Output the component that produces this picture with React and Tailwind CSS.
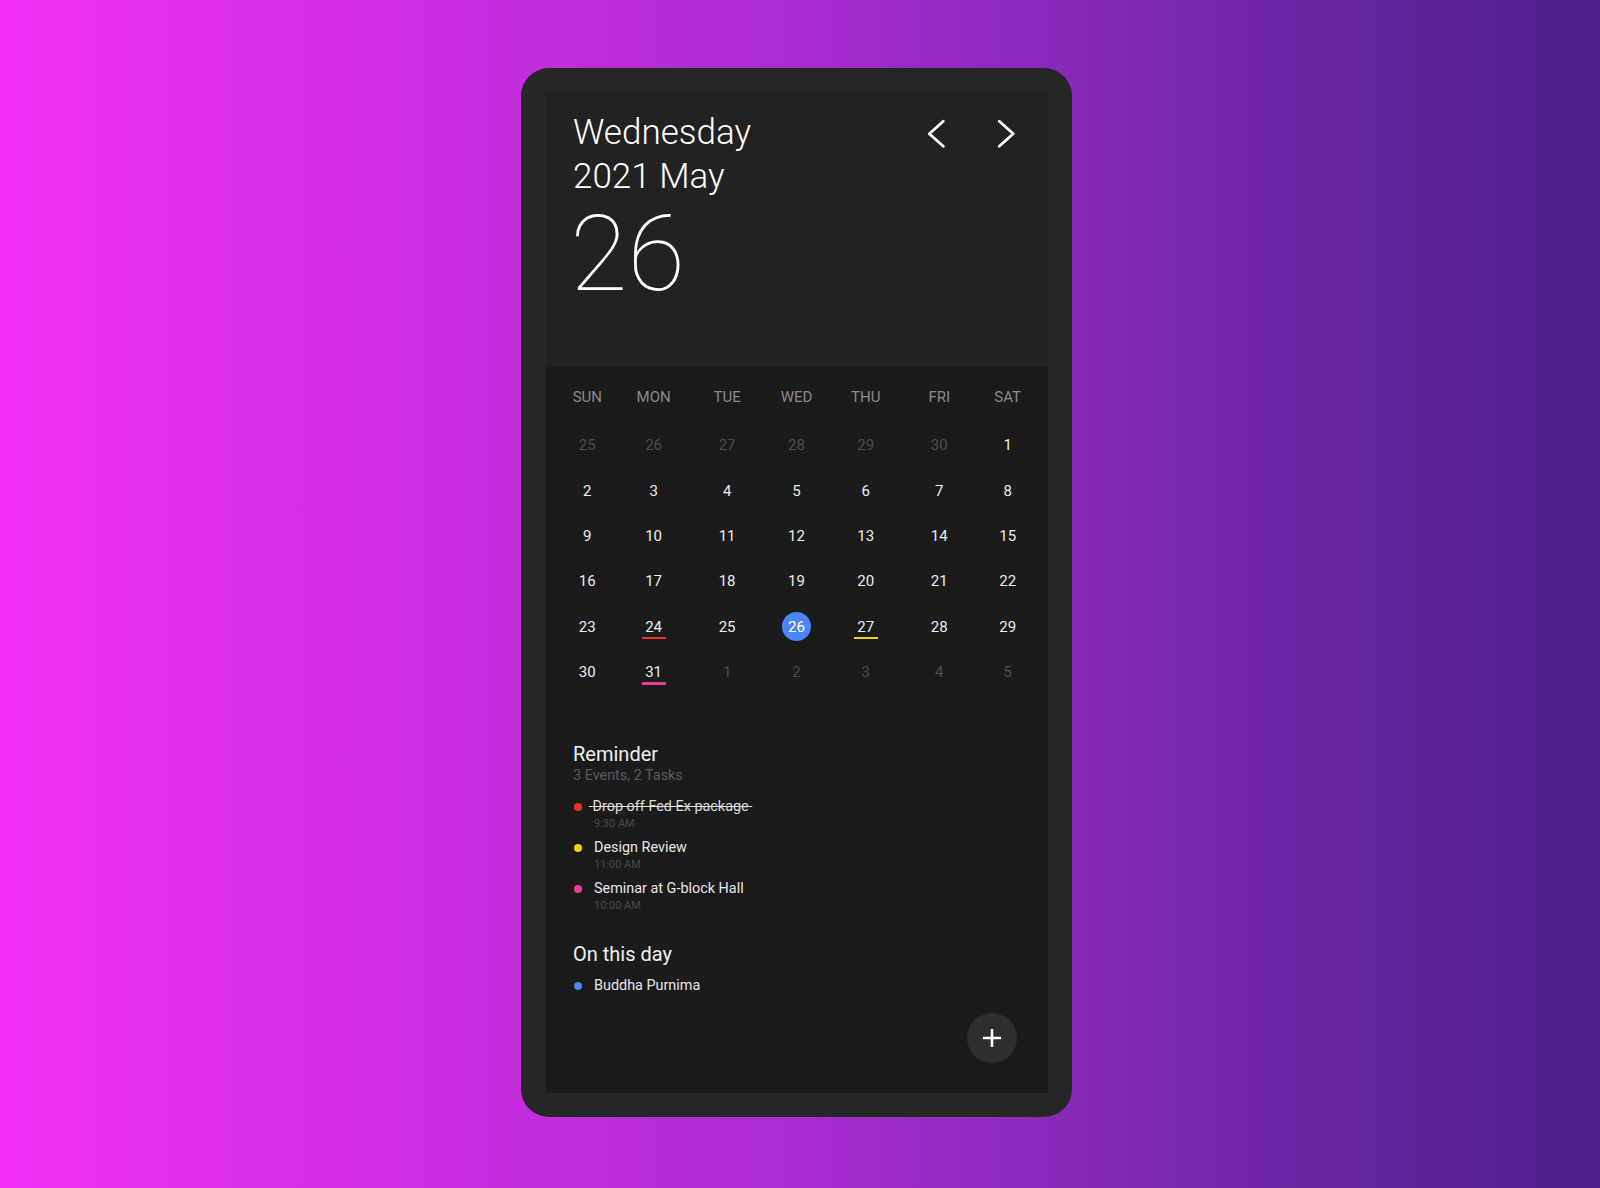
import React from "react";

const weekDays = ["SUN", "MON", "TUE", "WED", "THU", "FRI", "SAT"];

const rows = [
  [["25", 0], ["26", 0], ["27", 0], ["28", 0], ["29", 0], ["30", 0], ["1", 1]],
  [["2", 1], ["3", 1], ["4", 1], ["5", 1], ["6", 1], ["7", 1], ["8", 1]],
  [["9", 1], ["10", 1], ["11", 1], ["12", 1], ["13", 1], ["14", 1], ["15", 1]],
  [["16", 1], ["17", 1], ["18", 1], ["19", 1], ["20", 1], ["21", 1], ["22", 1]],
  [["23", 1], ["24", 1, "red"], ["25", 1], ["26", 1, "sel"], ["27", 1, "yellow"], ["28", 1], ["29", 1]],
  [["30", 1], ["31", 1, "pink"], ["1", 0], ["2", 0], ["3", 0], ["4", 0], ["5", 0]],
];

const cols = "grid grid-cols-[63.6px_69px_78px_60.8px_77.8px_69.2px_67.6px]";

function Underline({ kind }) {
  if (kind === "red")
    return <span className="absolute left-1/2 top-[24.5px] h-[2.5px] w-[24px] -translate-x-1/2 bg-[#e8342a]" />;
  if (kind === "yellow")
    return <span className="absolute left-1/2 top-[24.5px] h-[2.5px] w-[24px] -translate-x-1/2 bg-[#f6d20e]" />;
  if (kind === "pink")
    return <span className="absolute left-1/2 top-[24.5px] h-[2.5px] w-[24px] -translate-x-1/2 bg-[#ee3e93]" />;
  return null;
}

function DayCell({ d }) {
  const [label, active, kind] = d;
  if (kind === "sel") {
    return (
      <div className="flex items-center justify-center">
        <div className="flex h-[29px] w-[29px] items-center justify-center rounded-full bg-[#4a86f5] text-[15px] text-white">
          {label}
        </div>
      </div>
    );
  }
  return (
    <div className="flex items-center justify-center">
      <span
        className={
          "relative flex h-[29px] items-center justify-center text-[15px] " +
          (active ? "text-[#ececec]" : "text-[#4c4c4c]")
        }
      >
        {label}
        <Underline kind={kind} />
      </span>
    </div>
  );
}

function Item({ color, title, time, strike }) {
  return (
    <div className="flex items-start">
      <span className={"ml-px mt-[6px] h-[8px] w-[8px] shrink-0 rounded-full " + color} />
      <div className="ml-[12px] flex flex-col">
        {strike ? (
          <span className="-ml-[5px] text-[14.4px] leading-[20px] text-[#dcdcdc] line-through decoration-[#e0e0e0]">
            {"\u00a0"}Drop off Fed Ex package{"\u00a0"}
          </span>
        ) : (
          <span className="text-[14.4px] leading-[20px] text-[#e6e6e6]">{title}</span>
        )}
        {time && <span className="text-[11px] leading-[14px] text-[#4a4a4a]">{time}</span>}
      </div>
    </div>
  );
}

export default function App() {
  return (
    <div
      className="h-[1188px] w-full bg-gradient-to-r from-[#f42ef4] via-[#a82bd0] to-[#4a1f88] pl-[521px] pt-[68px]"
      style={{ fontFamily: "Roboto, 'Noto Sans', sans-serif" }}
    >
      <div className="h-[1049px] w-[551px] rounded-[28px] bg-[#262626] pb-[24px] pl-[25px] pr-[24px] pt-[24px]">
        <div className="flex h-full flex-col">
          {/* Header */}
          <div className="flex h-[275px] shrink-0 justify-between bg-[#222222] pl-[27px] pr-[32px] pt-[19px]">
            <div className="flex flex-col text-white">
              <div className="text-[35px] font-light leading-[44px]">Wednesday</div>
              <div className="text-[35px] font-light leading-[44px]">2021 May</div>
              <div className="-ml-[3px] mt-[3px] text-[105px] font-thin leading-[105px]">26</div>
            </div>
            <div className="mt-[8px] flex h-[30px] gap-[50px]">
              <svg width="20" height="30" viewBox="0 0 20 30" fill="none">
                <path d="M17.3 2.3 L3.3 14.8 L17.3 27.3" stroke="white" strokeWidth="2.8" strokeLinecap="round" strokeLinejoin="round" />
              </svg>
              <svg width="20" height="30" viewBox="0 0 20 30" fill="none">
                <path d="M3.25 2.3 L17.25 14.8 L3.25 27.3" stroke="white" strokeWidth="2.8" strokeLinecap="round" strokeLinejoin="round" />
              </svg>
            </div>
          </div>

          {/* Body */}
          <div className="relative flex flex-1 flex-col bg-[#1b1b1b]">
            <div className="pl-[9.5px] pt-[10px]">
              <div className={cols + " h-[40px] items-center"}>
                {weekDays.map((w) => (
                  <div key={w} className="text-center text-[15px] text-[#8a8a8a]">
                    {w}
                  </div>
                ))}
              </div>
              <div className="mt-[6px] flex flex-col">
                {rows.map((r, i) => (
                  <div key={i} className={cols + " h-[45.3px] items-center"}>
                    {r.map((d, j) => (
                      <DayCell key={j} d={d} />
                    ))}
                  </div>
                ))}
              </div>
            </div>

            <div className="mt-[47.5px] flex flex-col px-[27px]">
              <div className="text-[20px] leading-[24px] text-[#f0f0f0]">Reminder</div>
              <div className="text-[14.4px] leading-[20px] text-[#5a5a5a]">3 Events, 2 Tasks</div>
              <div className="mt-[11px] flex flex-col gap-[6.8px]">
                <Item color="bg-[#ee3124]" strike time="9:30 AM" />
                <Item color="bg-[#f7d10c]" title="Design Review" time="11:00 AM" />
                <Item color="bg-[#ef3f95]" title="Seminar at G-block Hall" time="10:00 AM" />
              </div>

              <div className="mt-[28.7px] text-[20px] leading-[24px] text-[#f0f0f0]">On this day</div>
              <div className="mt-[10.3px]">
                <Item color="bg-[#4a86f5]" title="Buddha Purnima" />
              </div>
            </div>

            <button className="absolute bottom-[30px] right-[31.5px] flex h-[50px] w-[50px] items-center justify-center rounded-full bg-[#2e2e2e]">
              <svg width="20" height="20" viewBox="0 0 20 20" fill="none">
                <path d="M10 1 V19 M1 10 H19" stroke="white" strokeWidth="2.6" />
              </svg>
            </button>
          </div>
        </div>
      </div>
    </div>
  );
}
